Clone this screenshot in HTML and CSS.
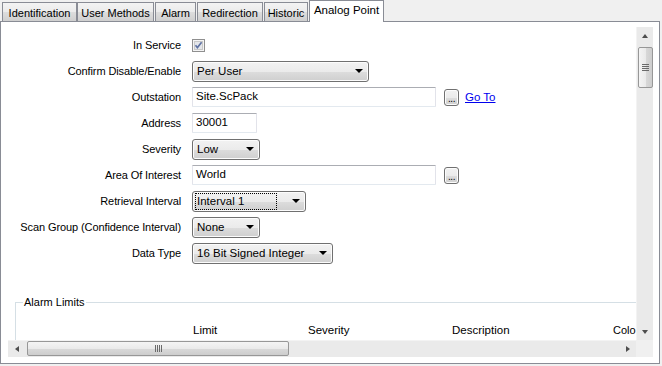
FILE: index.html
```html
<!DOCTYPE html>
<html>
<head>
<meta charset="utf-8">
<link rel="stylesheet" href="styles.css">
</head>
<body>
<div class="window">
  <div class="tabs">
    <div class="tab t-ident">Identification</div>
    <div class="tab t-user">User Methods</div>
    <div class="tab t-alarm">Alarm</div>
    <div class="tab t-redir">Redirection</div>
    <div class="tab t-hist">Historic</div>
    <div class="tab active t-analog">Analog Point</div>
  </div>
  <div class="panel">
    <div class="viewport">
      <div class="content">
        <div class="form">
          <div class="lbl">In Service</div>
          <div class="ctl">
            <span class="check">
              <svg width="13" height="13" viewBox="0 0 13 13">
                <rect x="0.5" y="0.5" width="12" height="12" fill="#f4f4f4" stroke="#8f8f8f"/>
                <rect x="2.5" y="2.5" width="8" height="8" fill="#e4e6ea" stroke="#c8c8c8"/>
                <path d="M3.5 6.2 L5.4 8.6 L9.6 3.2" fill="none" stroke="#5f72a3" stroke-width="1.6"/>
              </svg>
            </span>
          </div>

          <div class="lbl">Confirm Disable/Enable</div>
          <div class="ctl"><div class="combo w-confirm"><span class="ctext">Per User</span><span class="arrow"></span></div></div>

          <div class="lbl">Outstation</div>
          <div class="ctl">
            <div class="input w-long">Site.ScPack</div>
            <div class="dots">...</div>
            <a class="link">Go To</a>
          </div>

          <div class="lbl">Address</div>
          <div class="ctl"><div class="input w-addr">30001</div></div>

          <div class="lbl">Severity</div>
          <div class="ctl"><div class="combo w-small"><span class="ctext">Low</span><span class="arrow"></span></div></div>

          <div class="lbl">Area Of Interest</div>
          <div class="ctl">
            <div class="input w-long">World</div>
            <div class="dots">...</div>
          </div>

          <div class="lbl">Retrieval Interval</div>
          <div class="ctl"><div class="combo w-retr"><span class="ctext focus">Interval 1</span><span class="arrow"></span></div></div>

          <div class="lbl">Scan Group (Confidence Interval)</div>
          <div class="ctl"><div class="combo w-small"><span class="ctext">None</span><span class="arrow"></span></div></div>

          <div class="lbl">Data Type</div>
          <div class="ctl"><div class="combo w-dtype"><span class="ctext">16 Bit Signed Integer</span><span class="arrow"></span></div></div>
        </div>

        <fieldset class="group">
          <legend class="legend">Alarm Limits</legend>
          <div class="cols">
            <span></span>
            <span>Limit</span>
            <span>Severity</span>
            <span>Description</span>
            <span class="last">Colo</span>
          </div>
        </fieldset>
      </div>
    </div>
    <div class="vscroll">
      <div class="sbtn"><span class="tri-up"></span></div>
      <div class="vthumb"><span class="grip-h"></span></div>
      <div class="vtrack"></div>
      <div class="sbtn"><span class="tri-down"></span></div>
    </div>
    <div class="hscroll">
      <div class="sbtn-h"><span class="tri-left"></span></div>
      <div class="hthumb"><span class="grip-v"></span></div>
      <div class="htrack"></div>
      <div class="sbtn-h"><span class="tri-right"></span></div>
    </div>
    <div class="corner"></div>
  </div>
</div>
</body>
</html>
```

FILE: styles.css
```css
html, body {
  margin: 0;
  padding: 0;
  background: #f0f0f0;
}
body {
  font-family: "Liberation Sans", Arial, sans-serif;
  font-size: 11px;
  color: #000;
  width: 662px;
  height: 366px;
  overflow: hidden;
}
.window {
  display: flex;
  flex-direction: column;
}
.tabs {
  display: flex;
  align-items: flex-end;
  height: 21px;
  padding-left: 2px;
  position: relative;
  z-index: 2;
}
.tab {
  box-sizing: border-box;
  height: 19px;
  margin-right: 1px;
  border: 1px solid #898c95;
  border-bottom: none;
  background: linear-gradient(#f3f3f3, #ebebeb 50%, #dddddd 51%, #cfcfcf);
  display: flex;
  align-items: center;
  justify-content: center;
  font-size: 11px;
  padding-top: 1px;
  white-space: nowrap;
}
.t-ident { width: 75px; margin-right: 0; }
.t-user { width: 77px; }
.t-alarm { width: 41px; }
.t-redir { width: 66px; }
.t-hist { width: 44px; }
.t-analog { width: 75px; }
.tab.active {
  height: 22px;
  background: #fff;
  margin-bottom: -1px;
  padding-top: 0;
  padding-bottom: 3px;
  font-size: 11.5px;
}
.panel {
  box-sizing: border-box;
  width: 660px;
  height: 343px;
  border: 1px solid #898c95;
  background: #fff;
  display: grid;
  grid-template-columns: 628px 17px;
  grid-template-rows: 313px 17px;
  padding: 5px 6px 6px 7px;
}
.viewport {
  overflow: hidden;
  position: relative;
}
.content {
  width: 1400px;
  padding-top: 5px;
}
.form {
  display: grid;
  grid-template-columns: 173px auto;
  grid-auto-rows: 26px;
  column-gap: 11px;
  align-items: center;
  justify-items: start;
}
.lbl {
  justify-self: end;
  white-space: nowrap;
  letter-spacing: -0.1px;
}
.ctl {
  display: flex;
  align-items: center;
}
.check {
  display: block;
  width: 13px;
  height: 13px;
}
.check svg { display: block; }
.combo {
  box-sizing: border-box;
  height: 21px;
  border: 1px solid #707070;
  border-radius: 3px;
  background: linear-gradient(#f2f2f2, #ebebeb 50%, #dddddd 51%, #cfcfcf);
  display: flex;
  align-items: center;
  padding-left: 3px;
  padding-right: 5px;
  box-shadow: inset 0 0 0 1px #fcfcfc;
}
.ctext {
  flex: 1;
  font-size: 11.5px;
  padding-left: 1px;
  line-height: 15px;
}
.ctext.focus {
  outline: 1px dotted #000;
  outline-offset: 0px;
  margin-right: 12px;
}
.arrow {
  width: 0;
  height: 0;
  border-left: 4px solid transparent;
  border-right: 4px solid transparent;
  border-top: 4px solid #000;
  margin-left: 4px;
}
.w-confirm { width: 177px; }
.w-small { width: 68px; }
.w-retr { width: 114px; }
.w-dtype { width: 141px; }
.input {
  box-sizing: border-box;
  height: 20px;
  border: 1px solid #abadb3;
  border-left-color: #e2e3ea;
  border-right-color: #e2e3ea;
  border-bottom-color: #e3e9ef;
  border-radius: 1px;
  background: #fff;
  padding-left: 3px;
  line-height: 17px;
  font-size: 11.5px;
  white-space: nowrap;
}
.w-long { width: 244px; }
.w-addr { width: 65px; }
.dots {
  box-sizing: border-box;
  width: 15px;
  height: 17px;
  margin-left: 8px;
  border: 1px solid #707070;
  border-radius: 3px;
  background: linear-gradient(#f2f2f2, #ebebeb 50%, #dddddd 51%, #cfcfcf);
  box-shadow: inset 0 0 0 1px #fcfcfc;
  font-size: 10px;
  line-height: 18px;
  text-align: center;
  letter-spacing: -0.5px;
}
.link {
  margin-left: 6px;
  color: #0000ee;
  text-decoration: underline;
  font-size: 11.5px;
}
.group {
  margin: 30px 0 0 7px;
  padding: 0;
  border: none;
  border-top: 1px solid #d5dfe5;
  border-left: 1px solid #d5dfe5;
  height: 200px;
  min-width: 0;
}
.legend {
  margin-left: 7px;
  padding: 0 1px;
  font-size: 11px;
}
.cols {
  display: grid;
  grid-template-columns: 177px 115px 144px 161px 100px;
  margin-top: 16px;
  font-size: 11.5px;
}
.cols .last {
  font-size: 11px;
}
.vscroll {
  display: flex;
  flex-direction: column;
  background: #eaeaea;
  border-left: 1px solid #f3f3f3;
  box-sizing: border-box;
}
.sbtn {
  height: 17px;
  display: flex;
  align-items: center;
  justify-content: center;
  flex: none;
}
.tri-up {
  width: 0; height: 0;
  border-left: 3.5px solid transparent;
  border-right: 3.5px solid transparent;
  border-bottom: 4px solid #4d4d4d;
}
.tri-down {
  width: 0; height: 0;
  border-left: 3.5px solid transparent;
  border-right: 3.5px solid transparent;
  border-top: 4px solid #4d4d4d;
}
.vthumb {
  box-sizing: border-box;
  height: 41px;
  margin: 3px 0 0 1px;
  width: 15px;
  border: 1px solid #979797;
  border-radius: 2px;
  background: linear-gradient(90deg, #f4f4f4, #eaeaea 50%, #d9d9d9 51%, #cdcdcd);
  display: flex;
  align-items: center;
  justify-content: center;
  flex: none;
}
.grip-h {
  width: 7px;
  height: 7px;
  background: repeating-linear-gradient(#6a6a6a 0 1px, transparent 1px 2px);
}
.vtrack { flex: 1; }
.hscroll {
  display: flex;
  background: #eaeaea;
  border-top: 1px solid #f3f3f3;
  box-sizing: border-box;
}
.sbtn-h {
  width: 17px;
  display: flex;
  align-items: center;
  justify-content: center;
  flex: none;
}
.tri-left {
  width: 0; height: 0;
  border-top: 3.5px solid transparent;
  border-bottom: 3.5px solid transparent;
  border-right: 4px solid #4d4d4d;
}
.tri-right {
  width: 0; height: 0;
  border-top: 3.5px solid transparent;
  border-bottom: 3.5px solid transparent;
  border-left: 4px solid #4d4d4d;
}
.hthumb {
  box-sizing: border-box;
  width: 262px;
  height: 15px;
  margin: 0 0 0 2px;
  border: 1px solid #979797;
  border-radius: 2px;
  background: linear-gradient(#f4f4f4, #eaeaea 50%, #d9d9d9 51%, #cdcdcd);
  display: flex;
  align-items: center;
  justify-content: center;
  flex: none;
}
.grip-v {
  width: 7px;
  height: 7px;
  background: repeating-linear-gradient(90deg, #6a6a6a 0 1px, transparent 1px 2px);
}
.htrack { flex: 1; }
.corner { background: #f0f0f0; }
```
